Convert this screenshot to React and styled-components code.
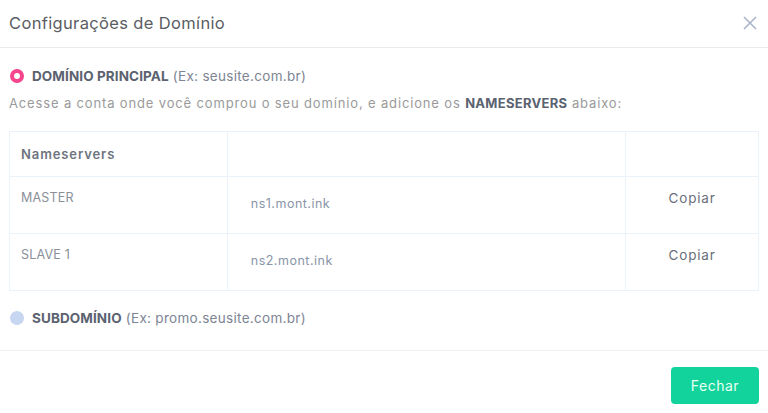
import React from "react";
import styled, { createGlobalStyle } from "styled-components";

const Global = createGlobalStyle`
  html, body { margin: 0; padding: 0; background: #fff; }
  body { font-family: "Inter", "Noto Sans", sans-serif; }
  * { box-sizing: border-box; }
`;

const Modal = styled.div`
  width: 768px;
  height: 413px;
  background: #fff;
  display: flex;
  flex-direction: column;
`;

const Header = styled.div`
  height: 48px;
  display: flex;
  align-items: center;
  justify-content: space-between;
  padding: 0 10px 2px 9px;
  border-bottom: 1px solid #e9ecef;
`;

const Title = styled.h5`
  margin: 0;
  font-size: 16.5px;
  font-weight: 400;
  color: #5a5d63;
  letter-spacing: 0.35px;
`;

const Close = styled.button`
  border: 0;
  background: none;
  padding: 0;
  width: 16px;
  height: 16px;
  display: flex;
  align-items: center;
  justify-content: center;
  cursor: pointer;
`;

const Body = styled.div`
  flex: 1;
  padding: 19px 9px 0 9px;
  border-bottom: 1px solid #eef0f3;
`;

const OptionRow = styled.label`
  display: flex;
  align-items: center;
  gap: 8px;
  height: 18px;
  margin-left: 1px;
  font-size: 13.5px;
  color: #7d8594;
  letter-spacing: 0.3px;
`;

const Radio = styled.span`
  width: 14px;
  height: 14px;
  border-radius: 50%;
  background: ${(p) => (p.$checked ? "#f5458c" : "#c7d7f1")};
  display: flex;
  align-items: center;
  justify-content: center;
  flex-shrink: 0;
  &::after {
    content: "";
    display: ${(p) => (p.$checked ? "block" : "none")};
    width: 6px;
    height: 6px;
    border-radius: 50%;
    background: #fff;
  }
`;

const Strong = styled.strong`
  font-weight: 700;
  color: #5b6270;
  letter-spacing: 0.1px;
`;

const Desc = styled.p`
  margin: 10px 0 20px 0;
  font-size: 13px;
  color: #9a9a9a;
  letter-spacing: 0.85px;
`;

const DescStrong = styled.strong`
  font-weight: 700;
  color: #5b6270;
  letter-spacing: 0.3px;
`;

const Table = styled.table`
  width: 750px;
  border-collapse: collapse;
  font-size: 12.5px;
  & td, & th {
    border: 1px solid #ecf2f9;
  }
`;

const HeadCell = styled.th`
  height: 45px;
  text-align: left;
  padding: 0 11px;
  font-weight: 600;
  color: #6e7580;
  font-size: 13px;
  letter-spacing: 0.9px;
  width: ${(p) => p.$w}px;
`;

const Cell = styled.td`
  height: 57px;
  vertical-align: top;
  padding: ${(p) => (p.$value ? "19px 23px 0" : "13px 11px 0")};
  color: ${(p) => (p.$value ? "#8995a8" : "#8a8f98")};
  text-align: ${(p) => (p.$center ? "center" : "left")};
  font-size: ${(p) => (p.$center ? "13.5px" : "12.5px")};
  letter-spacing: ${(p) => (p.$value ? "0.5px" : p.$center ? "0.8px" : "0.2px")};
  ${(p) => p.$center && "color: #6a707a;"}
`;

const Sub = styled(OptionRow)`
  margin-top: 18px;
`;

const Footer = styled.div`
  height: 62px;
  display: flex;
  align-items: flex-start;
  justify-content: flex-end;
  padding: 16px 9px 0 0;
`;

const Button = styled.button`
  width: 88px;
  height: 37px;
  border: 0;
  border-radius: 4px;
  background: #12d39b;
  color: #e9fff6;
  font-family: inherit;
  font-size: 14px;
  letter-spacing: 0.5px;
  cursor: pointer;
`;

export default function App() {
  const rows = [
    ["MASTER", "ns1.mont.ink"],
    ["SLAVE 1", "ns2.mont.ink"],
  ];
  return (
    <>
      <Global />
      <Modal>
        <Header>
          <Title>Configurações de Domínio</Title>
          <Close aria-label="Fechar">
            <svg width="14" height="14" viewBox="0 0 14 14">
              <path d="M1 1L13 13M13 1L1 13" stroke="#aab4c8" strokeWidth="1.6" fill="none" />
            </svg>
          </Close>
        </Header>
        <Body>
          <OptionRow>
            <Radio $checked />
            <span>
              <Strong>DOMÍNIO PRINCIPAL</Strong> (Ex: seusite.com.br)
            </span>
          </OptionRow>
          <Desc>
            Acesse a conta onde você comprou o seu domínio, e adicione os{" "}
            <DescStrong>NAMESERVERS</DescStrong> abaixo:
          </Desc>
          <Table>
            <thead>
              <tr>
                <HeadCell $w={218}>Nameservers</HeadCell>
                <HeadCell $w={399} />
                <HeadCell $w={133} />
              </tr>
            </thead>
            <tbody>
              {rows.map(([k, v]) => (
                <tr key={k}>
                  <Cell>{k}</Cell>
                  <Cell $value>{v}</Cell>
                  <Cell $center>Copiar</Cell>
                </tr>
              ))}
            </tbody>
          </Table>
          <Sub>
            <Radio />
            <span>
              <Strong>SUBDOMÍNIO</Strong> (Ex: promo.seusite.com.br)
            </span>
          </Sub>
        </Body>
        <Footer>
          <Button>Fechar</Button>
        </Footer>
      </Modal>
    </>
  );
}
